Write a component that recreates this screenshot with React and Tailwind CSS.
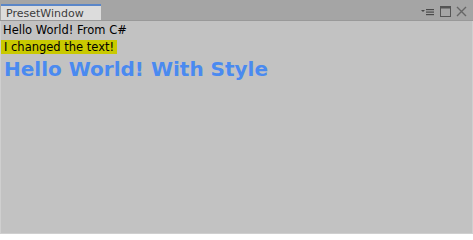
import React from "react";

const font = { fontFamily: '"DejaVu Sans", Verdana, sans-serif' };

const App = () => {
  return (
    <div
      className="w-[473px] h-[234px] flex flex-col bg-[#c2c2c2] overflow-hidden"
      style={font}
    >
      {/* Header / tab strip */}
      <div className="h-[21px] flex items-end justify-between bg-[#a5a5a5] border-b border-[#999999]">
        <div className="ml-[1px] w-[100px] h-[16px] flex items-center pl-[5px] bg-[#dcdcdc] border-t-2 border-[#5a86c8] text-[11px] leading-none text-[#3c3c3c]">
          PresetWindow
        </div>
        <div className="flex items-center gap-[5px] pr-[6px] pb-[3px] text-[#5a5a5a]">
          {/* menu */}
          <svg width="14" height="10" viewBox="0 0 14 10">
            <path d="M0 3 L4 3 L2 5 Z" fill="#4a4a4a" />
            <rect x="5" y="2" width="8" height="1.2" fill="#4a4a4a" />
            <rect x="5" y="4.5" width="8" height="1.2" fill="#4a4a4a" />
            <rect x="5" y="7" width="8" height="1.2" fill="#4a4a4a" />
          </svg>
          {/* maximize */}
          <svg width="11" height="11" viewBox="0 0 11 11">
            <rect x="0.5" y="0.5" width="10" height="10" fill="none" stroke="#555" />
            <rect x="0.5" y="0.5" width="10" height="2" fill="#555" />
          </svg>
          {/* close */}
          <svg width="11" height="11" viewBox="0 0 11 11">
            <path d="M1 1 L10 10 M10 1 L1 10" stroke="#666" strokeWidth="1.4" />
          </svg>
        </div>
      </div>

      {/* Body */}
      <div className="flex-1 flex flex-col items-start border-x border-b border-[#cfcfcf] pt-[1px]">
        <div className="pl-[2px] text-[11.5px] leading-[16px] text-black">
          Hello World! From C#
        </div>
        <div className="mt-[2px] px-[3px] bg-[#c9c900] text-[11.5px] leading-[14px] text-black">
          I changed the text!
        </div>
        <div className="mt-[3px] pl-[3px] text-[20px] font-bold leading-[24px] text-[#4a8af0]">
          Hello World! With Style
        </div>
      </div>
    </div>
  );
};

export default App;
